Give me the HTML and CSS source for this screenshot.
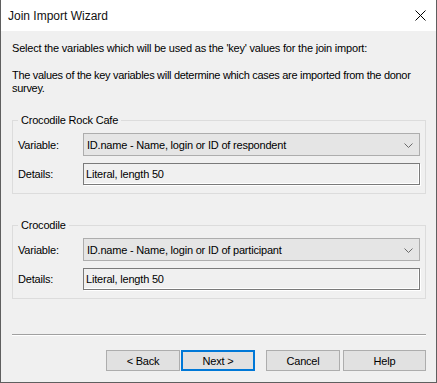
FILE: index.html
```html
<!DOCTYPE html>
<html>
<head>
<meta charset="utf-8">
<link rel="stylesheet" href="styles.css">
</head>
<body>
<div class="window">
  <div class="titlebar">
    <span class="title">Join Import Wizard</span>
    <svg class="close" width="11" height="11" viewBox="0 0 11 11"><path d="M0.5 0.5L10.5 10.5M10.5 0.5L0.5 10.5" stroke="#000" stroke-width="1" fill="none"/></svg>
  </div>
  <div class="content">
    <p class="intro">Select the variables which will be used as the 'key' values for the join import:</p>
    <p class="intro2">The values of the key variables will determine which cases are imported from the donor survey.</p>

    <div class="group first">
      <span class="legend">Crocodile Rock Cafe</span>
      <div class="row">
        <span class="label">Variable:</span>
        <div class="combo"><span>ID.name - Name, login or ID of respondent</span><svg class="chev" width="9" height="5" viewBox="0 0 9 5"><path d="M0.5 0.5L4.5 4.5L8.5 0.5" stroke="#6a6a6a" stroke-width="1" fill="none"/></svg></div>
      </div>
      <div class="row">
        <span class="label">Details:</span>
        <div class="field">Literal, length 50</div>
      </div>
    </div>

    <div class="group second">
      <span class="legend">Crocodile</span>
      <div class="row">
        <span class="label">Variable:</span>
        <div class="combo"><span>ID.name - Name, login or ID of participant</span><svg class="chev" width="9" height="5" viewBox="0 0 9 5"><path d="M0.5 0.5L4.5 4.5L8.5 0.5" stroke="#6a6a6a" stroke-width="1" fill="none"/></svg></div>
      </div>
      <div class="row">
        <span class="label">Details:</span>
        <div class="field">Literal, length 50</div>
      </div>
    </div>

    <div class="sep"></div>

    <div class="buttons">
      <div class="btn back">&lt; Back</div>
      <div class="btn next">Next &gt;</div>
      <div class="btn cancel">Cancel</div>
      <div class="btn help">Help</div>
    </div>
  </div>
</div>
</body>
</html>
```
FILE: styles.css
```css
* { box-sizing: border-box; }
html, body { margin: 0; padding: 0; background: #f0f0f0; }
body { width: 437px; height: 383px; overflow: hidden; }

.window {
  width: 437px;
  height: 383px;
  background: #f0f0f0;
  border-left: 1px solid #5f5f5f;
  border-right: 1px solid #5f5f5f;
  border-bottom: 1px solid #5f5f5f;
  font-family: "Liberation Sans", Arial, sans-serif;
  font-size: 11px;
  letter-spacing: -0.2px;
  color: #000;
}

.titlebar {
  height: 31px;
  background: #fff;
  display: flex;
  align-items: center;
  justify-content: space-between;
  padding: 0 10px 0 7px;
}
.title {
  font-family: "Liberation Sans", Arial, sans-serif;
  font-size: 12px;
  letter-spacing: 0;
  margin-top: 1px;
  color: #111;
}
.close { display: block; margin-top: -1px; }

.content {
  padding: 11px 10px 0 11px;
}

.intro, .intro2 {
  margin: 0;
  line-height: 13px;
}
.intro2 { margin-top: 14px; letter-spacing: -0.3px; }

.group {
  position: relative;
  border: 1px solid #dcdcdc;
  padding: 12px 5px 8px 5px;
  display: flex;
  flex-direction: column;
  gap: 7px;
}
.group.first { margin-top: 25px; }
.group.second { margin-top: 31px; }

.legend {
  position: absolute;
  left: 5px;
  top: -7px;
  padding: 0 3px;
  background: #f0f0f0;
  line-height: 13px;
}

.row {
  display: flex;
  align-items: center;
}
.label { width: 65px; flex: none; }

.combo {
  width: 337px;
  height: 23px;
  background: #e5e5e5;
  border: 1px solid #adadad;
  display: flex;
  align-items: center;
  justify-content: space-between;
  padding: 0 6px 0 3px;
}
.chev { display: block; margin-top: 1px; }

.field {
  width: 337px;
  height: 22px;
  background: #f0f0f0;
  border: 1px solid #7a7a7a;
  box-shadow: inset -1px -1px 0 #fff, 1px 1px 0 #fff;
  padding: 0 2px;
  display: flex;
  align-items: center;
}

.sep {
  margin-top: 35px;
  height: 2px;
  border-top: 1px solid #a0a0a0;
  border-bottom: 1px solid #fff;
}

.buttons {
  margin-top: 14px;
  display: flex;
  justify-content: flex-end;
}
.btn {
  width: 74px;
  height: 21px;
  background: #e1e1e1;
  border: 1px solid #adadad;
  display: flex;
  align-items: center;
  justify-content: center;
}
.next {
  margin-left: 1px;
  border: 2px solid #0078d7;
}
.cancel { margin-left: 11px; }
.help { margin-left: 3px; width: 83px; }
```
